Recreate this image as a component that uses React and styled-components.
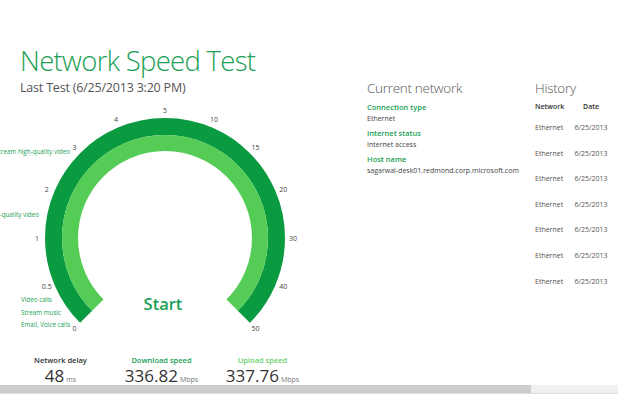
import React from "react";
import styled, { createGlobalStyle } from "styled-components";

const GREEN = "#1a9f55";
const DARK_ARC = "#0a9a40";
const LIGHT_ARC = "#55cc55";

const GlobalStyle = createGlobalStyle`
  html, body {
    margin: 0;
    padding: 0;
    background: #ffffff;
    overflow: hidden;
  }
  body {
    font-family: "Open Sans", "Liberation Sans", sans-serif;
  }
`;

const ticks = ["0", "0.5", "1", "2", "3", "4", "5", "10", "15", "20", "30", "40", "50"];

const history = Array.from({ length: 7 }, () => ({ network: "Ethernet", date: "6/25/2013" }));

const networkInfo = [
    { label: "Connection type", value: "Ethernet" },
    { label: "Internet status", value: "Internet access" },
    { label: "Host name", value: "sagarwal-desk01.redmond.corp.microsoft.com" },
];

// gauge geometry (svg coords)
const CX = 165;
const CY = 138;

const polar = (r, deg) => {
    const a = (deg * Math.PI) / 180;
    return [CX + r * Math.cos(a), CY - r * Math.sin(a)];
};

const arcPath = (r) => {
    const [x1, y1] = polar(r, 225);
    const [x2, y2] = polar(r, -45);
    return `M ${x1} ${y1} A ${r} ${r} 0 1 1 ${x2} ${y2}`;
};

const Gauge = () => (
    <svg width="320" height="240" viewBox="0 0 320 240">
        <path d={arcPath(111.5)} fill="none" stroke={DARK_ARC} strokeWidth="17" />
        <path d={arcPath(95)} fill="none" stroke={LIGHT_ARC} strokeWidth="16" />
        {ticks.map((t, i) => {
            const [x, y] = polar(128, 225 - i * 22.5);
            return (
                <text key={t} x={x} y={y + 2.5} textAnchor="middle" fontSize="7" fill="#444">
                    {t}
                </text>
            );
        })}
        <g fontSize="6.3" fill={GREEN}>
            <text x="70" y="54" textAnchor="end">Stream high-quality video</text>
            <text x="39" y="117" textAnchor="end">Stream standard-quality video</text>
            <text x="21" y="202">Video calls</text>
            <text x="21" y="215">Stream music</text>
            <text x="21" y="227">Email, Voice calls</text>
        </g>
    </svg>
);

const App = () => (
    <Screen>
        <GlobalStyle />
        <Content>
            <LeftPane>
                <Title>Network Speed Test</Title>
                <Subtitle>Last Test (6/25/2013 3:20 PM)</Subtitle>
                <GaugeWrap>
                    <Gauge />
                    <StartButton>Start</StartButton>
                </GaugeWrap>
                <Stats>
                    <Stat>
                        <StatLabel color="#333">Network delay</StatLabel>
                        <StatValue>48<Unit>ms</Unit></StatValue>
                    </Stat>
                    <Stat>
                        <StatLabel color={GREEN}>Download speed</StatLabel>
                        <StatValue>336.82<Unit>Mbps</Unit></StatValue>
                    </Stat>
                    <Stat>
                        <StatLabel color="#6ad06a">Upload speed</StatLabel>
                        <StatValue>337.76<Unit>Mbps</Unit></StatValue>
                    </Stat>
                </Stats>
            </LeftPane>

            <NetworkPane>
                <SectionHeading>Current network</SectionHeading>
                {networkInfo.map((item) => (
                    <InfoGroup key={item.label}>
                        <InfoLabel>{item.label}</InfoLabel>
                        <InfoValue>{item.value}</InfoValue>
                    </InfoGroup>
                ))}
            </NetworkPane>

            <HistoryPane>
                <SectionHeading>History</SectionHeading>
                <HistoryTable>
                    <HeadCell>Network</HeadCell>
                    <HeadCell center>Date</HeadCell>
                    {history.map((row, i) => (
                        <React.Fragment key={i}>
                            <Cell>{row.network}</Cell>
                            <Cell center>{row.date}</Cell>
                        </React.Fragment>
                    ))}
                </HistoryTable>
            </HistoryPane>
        </Content>
        <ScrollTrack>
            <ScrollThumb />
        </ScrollTrack>
    </Screen>
);

const Screen = styled.div`
    display: flex;
    flex-direction: column;
    width: 618px;
    height: 394px;
`;

const Content = styled.div`
    flex: 1;
    display: flex;
    padding-top: 44px;
    min-height: 0;
`;

const LeftPane = styled.div`
    width: 347px;
    padding-left: 20px;
    display: flex;
    flex-direction: column;
`;

const Title = styled.h1`
    margin: 0;
    font-size: 27.5px;
    font-weight: 300;
    line-height: 34px;
    color: ${GREEN};
    letter-spacing: -0.7px;
`;

const Subtitle = styled.div`
    margin-top: 2px;
    font-size: 12.5px;
    line-height: 16px;
    color: #555;
    letter-spacing: -0.2px;
`;

const GaugeWrap = styled.div`
    position: relative;
    width: 320px;
    height: 240px;
    margin-left: -20px;
    margin-top: 4px;

    svg {
        display: block;
        font-family: "Open Sans", "Liberation Sans", sans-serif;
    }
`;

const StartButton = styled.button`
    position: absolute;
    left: 123px;
    top: 192px;
    width: 80px;
    border: none;
    background: none;
    padding: 0;
    font-family: inherit;
    font-size: 16.5px;
    font-weight: 600;
    color: ${GREEN};
    cursor: pointer;
`;

const Stats = styled.div`
    display: grid;
    grid-template-columns: repeat(3, 101px);
    margin-left: -10px;
    margin-top: 15px;
`;

const Stat = styled.div`
    display: flex;
    flex-direction: column;
    align-items: center;
`;

const StatLabel = styled.div`
    font-size: 7.5px;
    font-weight: 600;
    line-height: 10px;
    color: ${(p) => p.color};
`;

const StatValue = styled.div`
    font-size: 17px;
    line-height: 22px;
    color: #333;
`;

const Unit = styled.span`
    font-size: 7px;
    color: #777;
    margin-left: 2px;
`;

const NetworkPane = styled.div`
    width: 168px;
    padding-top: 34px;
`;

const HistoryPane = styled.div`
    flex: 1;
    padding-top: 34px;
`;

const SectionHeading = styled.h2`
    margin: 0 0 4px;
    font-size: 13.5px;
    font-weight: 300;
    line-height: 20px;
    color: #555;
    letter-spacing: -0.3px;
`;

const InfoGroup = styled.div`
    margin-bottom: 4px;
`;

const InfoLabel = styled.div`
    font-size: 7.5px;
    font-weight: 600;
    line-height: 11px;
    color: ${GREEN};
`;

const InfoValue = styled.div`
    font-size: 7px;
    line-height: 11px;
    color: #444;
`;

const HistoryTable = styled.div`
    display: grid;
    grid-template-columns: 36px 40px;
    grid-template-rows: 21px;
    grid-auto-rows: 25.6px;
    align-items: start;
    margin-top: 2px;
`;

const HeadCell = styled.div`
    font-size: 7px;
    font-weight: 600;
    color: #333;
    line-height: 10px;
    text-align: ${(p) => (p.center ? "center" : "left")};
`;

const Cell = styled.div`
    font-size: 7px;
    color: #555;
    line-height: 10px;
    text-align: ${(p) => (p.center ? "center" : "left")};
`;

const ScrollTrack = styled.div`
    flex-shrink: 0;
    height: 8px;
    background: #f0f0f0;
    border-bottom: 1px solid #dcdcdc;
`;

const ScrollThumb = styled.div`
    width: 531px;
    height: 100%;
    background: #cdcdcd;
`;

export default App;
